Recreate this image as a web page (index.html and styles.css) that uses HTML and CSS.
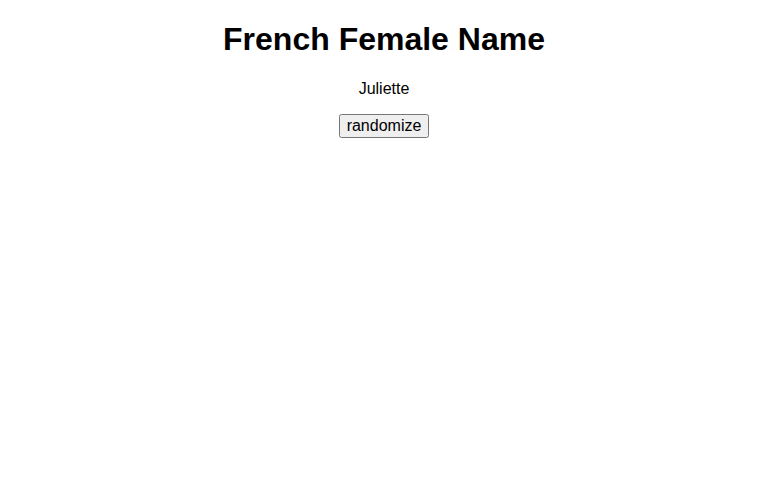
FILE: index.html
```html
<!DOCTYPE html>
<html lang="en">
<head>
	<meta charset="UTF-8">
	<title>French Female Name</title>
	<link rel="stylesheet" href="styles.css">
</head>
<body>
	<div class="app">
		<h1>French Female Name</h1>
		<p class="name">Juliette</p>
		<button class="randomize">randomize</button>
	</div>
</body>
</html>
```

FILE: styles.css
```css
body{
	margin:0;
	font-family:"Liberation Sans", Arial, sans-serif;
	color:#000;
}
.app{
	text-align:center;
}
h1{
	font-size:32px;
}
.randomize{
	font-family:inherit;
	font-size:16px;
}
```
